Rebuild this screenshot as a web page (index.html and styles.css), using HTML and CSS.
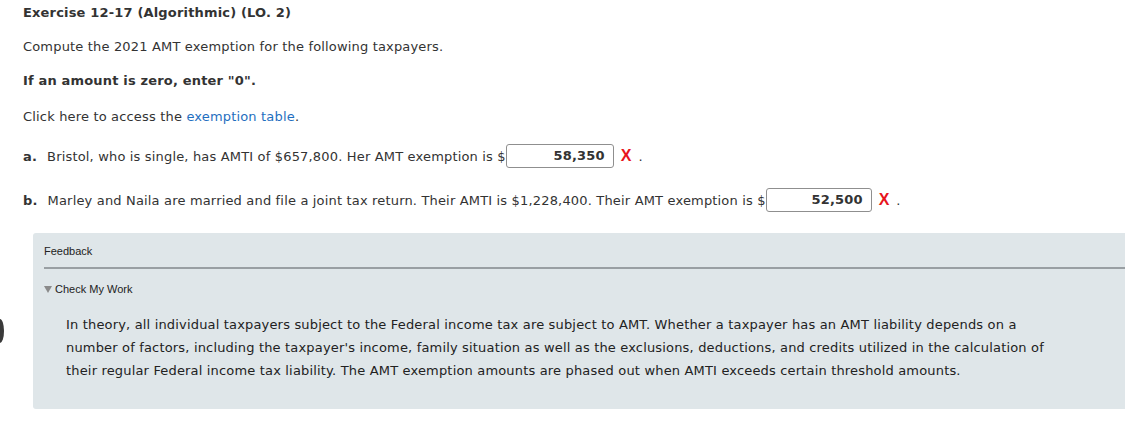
FILE: index.html
```html
<!DOCTYPE html>
<html lang="en">
<head>
<meta charset="utf-8">
<title>Exercise 12-17</title>
<link rel="stylesheet" href="styles.css">
</head>
<body>
<div class="edge-blob"></div>
<main class="page">
  <h1 class="title">Exercise 12-17 (Algorithmic) (LO. 2)</h1>
  <p class="line">Compute the 2021 AMT exemption for the following taxpayers.</p>
  <p class="line strong">If an amount is zero, enter "0".</p>
  <p class="line click">Click here to access the <a class="link" href="#">exemption table</a>.</p>

  <div class="question q-a">
    <span class="label">a.</span>
    <span class="qtext">Bristol, who is single, has AMTI of $657,800. Her AMT exemption is $</span>
    <span class="answer a-w1">58,350</span>
    <span class="wrong">X</span>
    <span class="dot">.</span>
  </div>

  <div class="question q-b">
    <span class="label">b.</span>
    <span class="qtext">Marley and Naila are married and file a joint tax return. Their AMTI is $1,228,400. Their AMT exemption is $</span>
    <span class="answer a-w2">52,500</span>
    <span class="wrong">X</span>
    <span class="dot">.</span>
  </div>

  <section class="feedback">
    <div class="fb-title">Feedback</div>
    <div class="fb-rule"></div>
    <div class="fb-toggle"><span class="tri"></span>Check My Work</div>
    <p class="fb-text">In theory, all individual taxpayers subject to the Federal income tax are subject to AMT. Whether a taxpayer has an AMT liability depends on a number of factors, including the taxpayer's income, family situation as well as the exclusions, deductions, and credits utilized in the calculation of their regular Federal income tax liability. The AMT exemption amounts are phased out when AMTI exceeds certain threshold amounts.</p>
  </section>
</main>
</body>
</html>
```

FILE: styles.css
```css
html, body {
  margin: 0;
  padding: 0;
  background: #ffffff;
  overflow: hidden;
}
body {
  width: 1125px;
  height: 428px;
  position: relative;
  font-family: "DejaVu Sans", Verdana, sans-serif;
  font-size: 13px;
  letter-spacing: 0.17px;
  color: #333333;
}
.page {
  padding: 3px 0 0 23px;
}
.title {
  margin: 0;
  font-size: 13px;
  line-height: 20px;
  font-weight: bold;
  color: #333333;
}
.line {
  margin: 14px 0 0 0;
  line-height: 20px;
}
.click {
  margin-top: 16px;
}
.strong {
  font-weight: bold;
}
.link {
  color: #1f6fc0;
  text-decoration: none;
}
.question {
  display: flex;
  align-items: center;
  height: 24px;
  white-space: nowrap;
}
.q-a { margin-top: 17px; }
.q-b { margin-top: 20px; }
.label {
  font-weight: bold;
  margin-right: 10px;
}
.answer {
  box-sizing: border-box;
  height: 24px;
  border: 1px solid #8f8f8f;
  border-radius: 3px;
  text-align: right;
  padding: 0 8px;
  line-height: 22px;
  font-weight: bold;
  color: #333333;
  background: #ffffff;
}
.a-w1 { width: 108px; }
.a-w2 { width: 106px; }
.wrong {
  font-family: "Liberation Sans", Arial, sans-serif;
  font-weight: bold;
  font-size: 16px;
  letter-spacing: 0;
  color: #e8141c;
  margin-left: 7px;
}
.dot {
  margin-left: 7px;
}
.feedback {
  margin: 21px 0 0 10px;
  width: 1120px;
  height: 176px;
  box-sizing: border-box;
  background: #dfe6e9;
  border-radius: 3px 0 0 3px;
  padding: 11px 0 0 11px;
}
.fb-title, .fb-toggle {
  font-family: "Liberation Sans", Arial, sans-serif;
  font-size: 11px;
  letter-spacing: 0;
  line-height: 14px;
  color: #222222;
}
.fb-rule {
  height: 0;
  border-top: 2px solid #999fa3;
  margin: 9px 0 0 0;
}
.fb-toggle {
  margin-top: 13px;
  display: flex;
  align-items: center;
}
.tri {
  width: 0;
  height: 0;
  border-left: 4px solid transparent;
  border-right: 4px solid transparent;
  border-top: 7px solid #8a8a8a;
  margin-right: 3px;
}
.fb-text {
  margin: 17px 0 0 22px;
  width: 990px;
  line-height: 23px;
  color: #222222;
}
.edge-blob {
  position: absolute;
  left: -4px;
  top: 319px;
  width: 8px;
  height: 24px;
  border-radius: 50%;
  background: #3a3a3a;
}
```
